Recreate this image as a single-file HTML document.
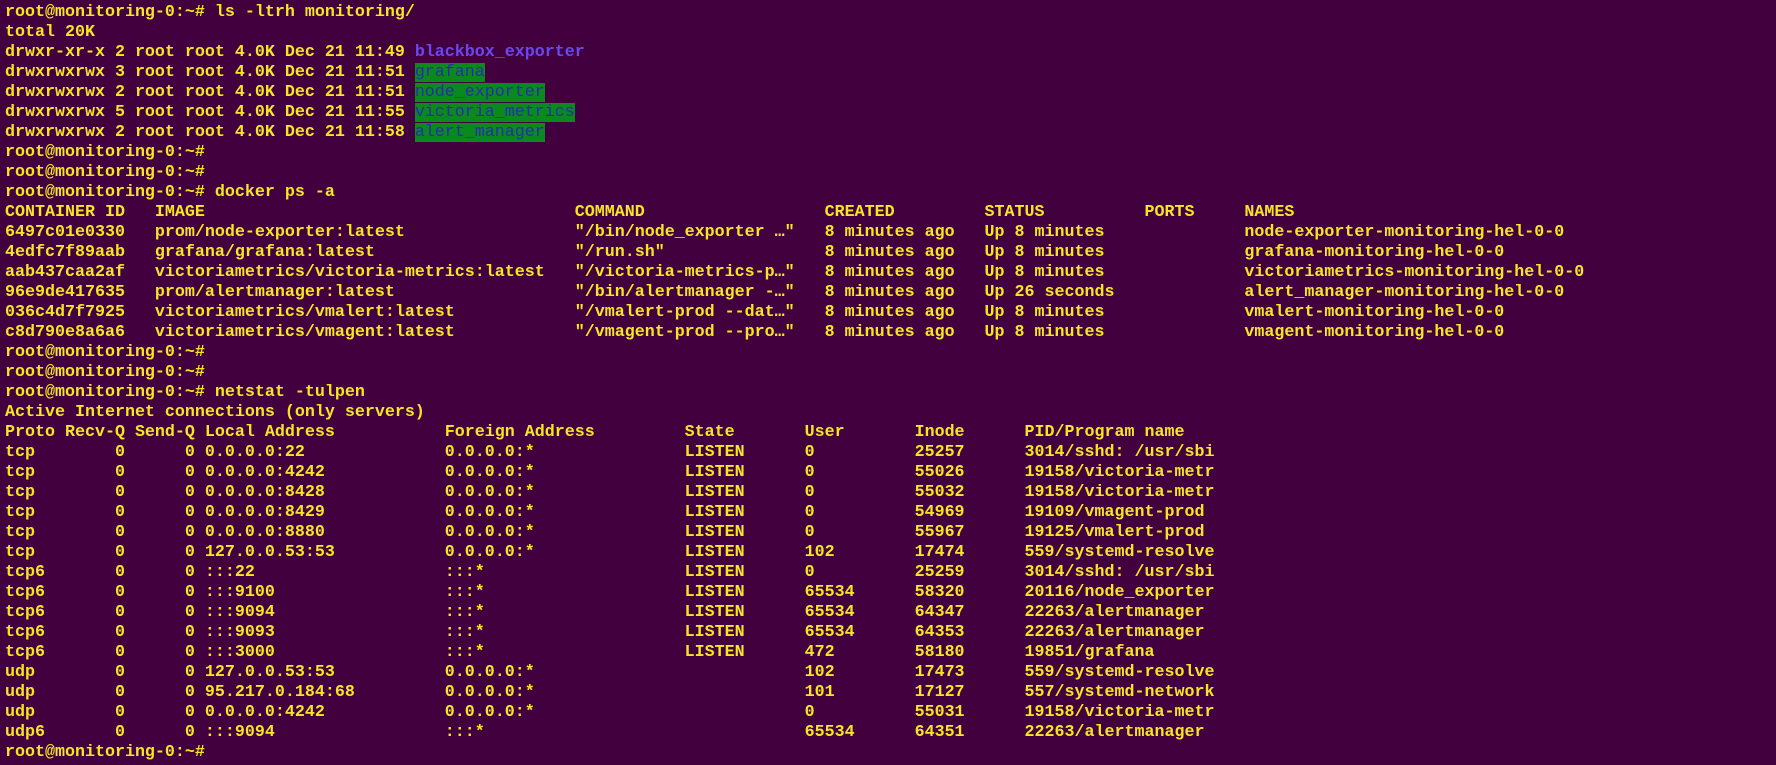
<!DOCTYPE html>
<html><head><meta charset="utf-8">
<style>
html,body{margin:0;padding:0;background:#42003f;width:1776px;height:765px;overflow:hidden}
pre{margin:0;position:absolute;left:5px;top:3px;font-family:"Liberation Mono",monospace;font-weight:bold;font-size:16.67px;line-height:20px;color:#f5e625;white-space:pre}
.p{color:#6a48f0}
.g{background:#0a8a1e;color:#2a2ab4;font-weight:normal}
</style></head><body>
<pre>root@monitoring-0:~# ls -ltrh monitoring/
total 20K
drwxr-xr-x 2 root root 4.0K Dec 21 11:49 <span class="p">blackbox_exporter</span>
drwxrwxrwx 3 root root 4.0K Dec 21 11:51 <span class="g">grafana</span>
drwxrwxrwx 2 root root 4.0K Dec 21 11:51 <span class="g">node_exporter</span>
drwxrwxrwx 5 root root 4.0K Dec 21 11:55 <span class="g">victoria_metrics</span>
drwxrwxrwx 2 root root 4.0K Dec 21 11:58 <span class="g">alert_manager</span>
root@monitoring-0:~#
root@monitoring-0:~#
root@monitoring-0:~# docker ps -a
CONTAINER ID   IMAGE                                     COMMAND                  CREATED         STATUS          PORTS     NAMES
6497c01e0330   prom/node-exporter:latest                 "/bin/node_exporter …"   8 minutes ago   Up 8 minutes              node-exporter-monitoring-hel-0-0
4edfc7f89aab   grafana/grafana:latest                    "/run.sh"                8 minutes ago   Up 8 minutes              grafana-monitoring-hel-0-0
aab437caa2af   victoriametrics/victoria-metrics:latest   "/victoria-metrics-p…"   8 minutes ago   Up 8 minutes              victoriametrics-monitoring-hel-0-0
96e9de417635   prom/alertmanager:latest                  "/bin/alertmanager -…"   8 minutes ago   Up 26 seconds             alert_manager-monitoring-hel-0-0
036c4d7f7925   victoriametrics/vmalert:latest            "/vmalert-prod --dat…"   8 minutes ago   Up 8 minutes              vmalert-monitoring-hel-0-0
c8d790e8a6a6   victoriametrics/vmagent:latest            "/vmagent-prod --pro…"   8 minutes ago   Up 8 minutes              vmagent-monitoring-hel-0-0
root@monitoring-0:~#
root@monitoring-0:~#
root@monitoring-0:~# netstat -tulpen
Active Internet connections (only servers)
Proto Recv-Q Send-Q Local Address           Foreign Address         State       User       Inode      PID/Program name
tcp        0      0 0.0.0.0:22              0.0.0.0:*               LISTEN      0          25257      3014/sshd: /usr/sbi
tcp        0      0 0.0.0.0:4242            0.0.0.0:*               LISTEN      0          55026      19158/victoria-metr
tcp        0      0 0.0.0.0:8428            0.0.0.0:*               LISTEN      0          55032      19158/victoria-metr
tcp        0      0 0.0.0.0:8429            0.0.0.0:*               LISTEN      0          54969      19109/vmagent-prod
tcp        0      0 0.0.0.0:8880            0.0.0.0:*               LISTEN      0          55967      19125/vmalert-prod
tcp        0      0 127.0.0.53:53           0.0.0.0:*               LISTEN      102        17474      559/systemd-resolve
tcp6       0      0 :::22                   :::*                    LISTEN      0          25259      3014/sshd: /usr/sbi
tcp6       0      0 :::9100                 :::*                    LISTEN      65534      58320      20116/node_exporter
tcp6       0      0 :::9094                 :::*                    LISTEN      65534      64347      22263/alertmanager
tcp6       0      0 :::9093                 :::*                    LISTEN      65534      64353      22263/alertmanager
tcp6       0      0 :::3000                 :::*                    LISTEN      472        58180      19851/grafana
udp        0      0 127.0.0.53:53           0.0.0.0:*                           102        17473      559/systemd-resolve
udp        0      0 95.217.0.184:68         0.0.0.0:*                           101        17127      557/systemd-network
udp        0      0 0.0.0.0:4242            0.0.0.0:*                           0          55031      19158/victoria-metr
udp6       0      0 :::9094                 :::*                                65534      64351      22263/alertmanager
root@monitoring-0:~#</pre>
</body></html>
